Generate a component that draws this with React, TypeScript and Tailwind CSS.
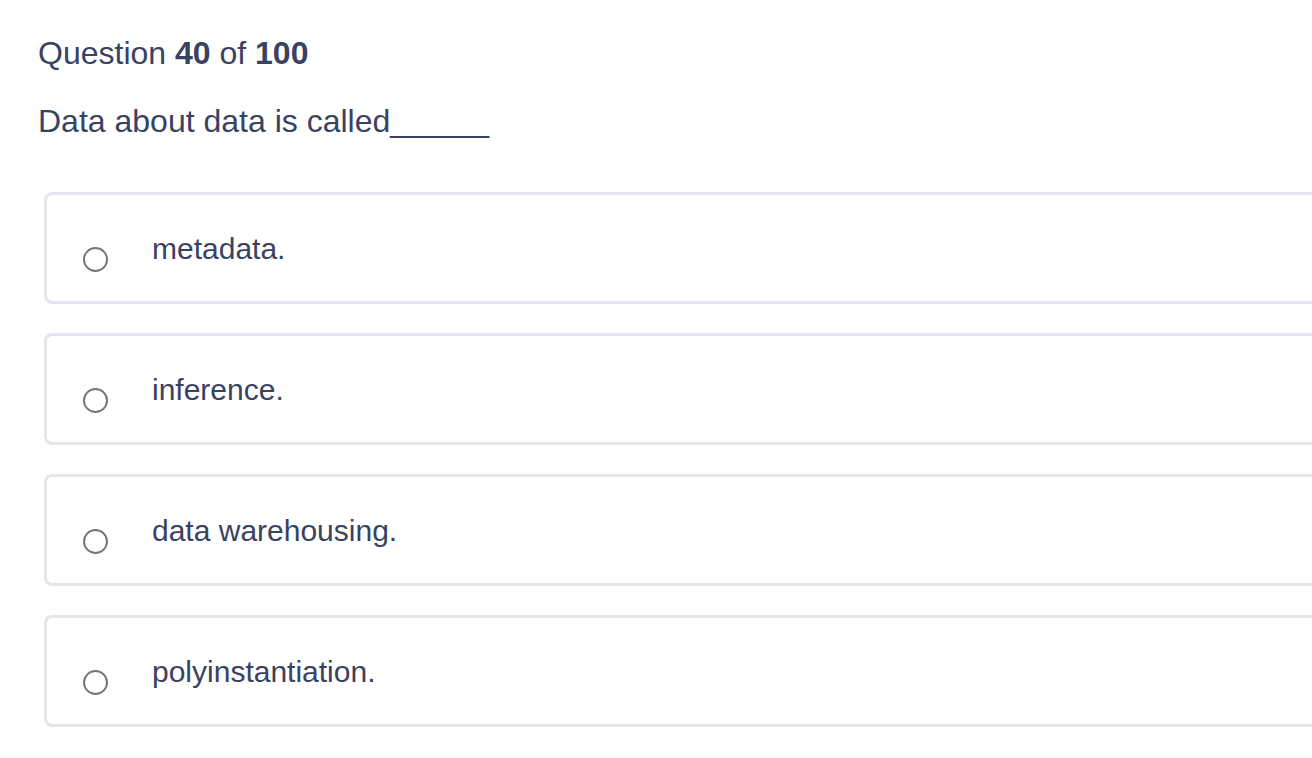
import React from 'react';

const options = ['metadata.', 'inference.', 'data warehousing.', 'polyinstantiation.'];

const Option: React.FC<{ label: string }> = ({ label }) => (
  <label className="flex h-[112px] w-[1300px] items-center rounded-lg border-[3px] border-[#e4e6ec] bg-white">
    <span className="ml-[36px] mt-[22px] block h-[25px] w-[25px] shrink-0 rounded-full border-2 border-[#767676]" />
    <span className="ml-[44px] text-[30px] text-[#3a4262]">{label}</span>
  </label>
);

export default function App() {
  return (
    <div
      className="h-[758px] w-[1312px] overflow-hidden bg-white text-[#3a4262]"
      style={{ fontFamily: '"Liberation Sans", Arial, sans-serif' }}
    >
      <div className="pl-[38px] pt-[34px]">
        <h1 className="text-[32px] leading-[38px]">
          Question <b>40</b> of <b>100</b>
        </h1>
        <p className="mt-[30px] text-[32px] leading-[38px]">
          Data about data is called<span className="tracking-[-1.6px]">______</span>
        </p>
      </div>
      <div className="mt-[52px] flex flex-col gap-[29px] pl-[44px]">
        {options.map((o) => (
          <Option key={o} label={o} />
        ))}
      </div>
    </div>
  );
}
